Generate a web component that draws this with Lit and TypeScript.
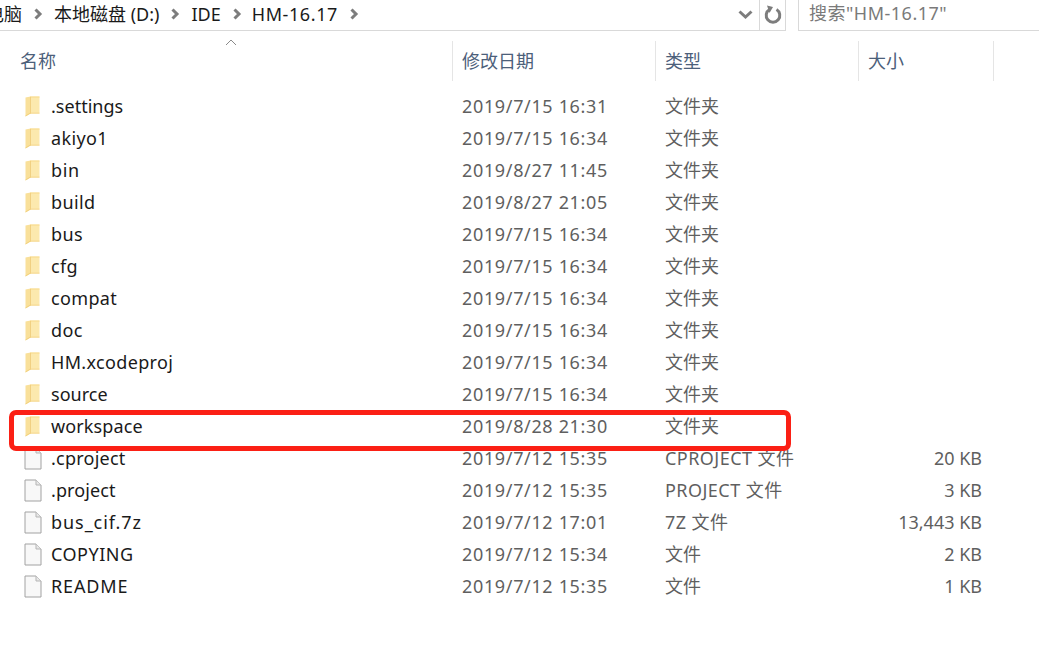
import { LitElement, html, css, svg } from "lit";
import { customElement } from "lit/decorators.js";

const F = "文件夹";
// name, date, type, size, is folder, letter-spacing of the name in px
const rows: [string, string, string, string, boolean, number][] = [
  [".settings", "2019/7/15 16:31", F, "", true, 0.02],
  ["akiyo1", "2019/7/15 16:34", F, "", true, 0.35],
  ["bin", "2019/8/27 11:45", F, "", true, 0.6],
  ["build", "2019/8/27 21:05", F, "", true, 0.35],
  ["bus", "2019/7/15 16:34", F, "", true, 0.35],
  ["cfg", "2019/7/15 16:34", F, "", true, 0.35],
  ["compat", "2019/7/15 16:34", F, "", true, 0.35],
  ["doc", "2019/7/15 16:34", F, "", true, 0.35],
  ["HM.xcodeproj", "2019/7/15 16:34", F, "", true, 0.35],
  ["source", "2019/7/15 16:34", F, "", true, 0.02],
  ["workspace", "2019/8/28 21:30", F, "", true, 0.13],
  [".cproject", "2019/7/12 15:35", "CPROJECT 文件", "20 KB", false, 0.23],
  [".project", "2019/7/12 15:35", "PROJECT 文件", "3 KB", false, 0.1],
  ["bus_cif.7z", "2019/7/12 17:01", "7Z 文件", "13,443 KB", false, 0.95],
  ["COPYING", "2019/7/12 15:34", "文件", "2 KB", false, 0.5],
  ["README", "2019/7/12 15:35", "文件", "1 KB", false, 0.85],
];

const folder = svg`<svg width="15" height="21" viewBox="0 0 15 21">
  <path d="M5 0.5 H14.5 V17.5 H5 Z" fill="#fce9ae"/>
  <path d="M5 0.5 H14.5 V1.6 H5 Z" fill="#f8dc90"/>
  <path d="M0.5 1.5 L5.5 0.5 V17.5 L0.5 20.5 Z" fill="#f9e09a"/>
  <path d="M5 1 L5.7 1 V17.5 L5 17.8 Z" fill="#ecc774"/>
  <path d="M0.5 20.5 L5.5 17.5 H14.5 V16.8 H5 L0.5 19.6 Z" fill="#f1d07e"/>
</svg>`;

const file = svg`<svg width="18" height="23" viewBox="0 0 18 23">
  <path d="M1 1 H12 L17 6 V22 H1 Z" fill="#f8f8f8" stroke="#a2a2a2"/>
  <path d="M12 1 V6 H17" fill="#e8e8e8" stroke="#b5b5b5"/>
</svg>`;

const chev = svg`<svg width="9" height="12" viewBox="0 0 9 12"><path d="M1.5 1.5 L6 6 L1.5 10.5" fill="none" stroke="#7d7d7d" stroke-width="3"/></svg>`;

@customElement("app-root")
export class AppRoot extends LitElement {
  static styles = css`
    :host {
      display: block;
      width: 1039px;
      height: 646px;
      position: relative;
      overflow: hidden;
      background: #fff;
      font-family: "Noto Sans", "Noto Sans CJK SC", sans-serif;
      font-size: 18px;
      color: #1a1a1a;
    }
    .top {
      display: flex;
      height: 31px;
      align-items: stretch;
    }
    .crumbs {
      width: 760px;
      display: flex;
      align-items: center;
      overflow: hidden;
      border-bottom: 1px solid #d9d9d9;
      border-right: 1px solid #d9d9d9;
      box-sizing: border-box;
      position: relative;
      white-space: nowrap;
      padding-bottom: 2px;
    }
    .crumbs .first { margin-left: -14px; }
    .crumbs span { line-height: 28px; }
    .crumbs .hm { letter-spacing: 0.6px; margin-left: -1px; }
    .sep { display: flex; margin: 0 11px 0 12px; }
    .dd { position: absolute; right: 6px; top: 10px; display: flex; }
    .refresh {
      width: 26px;
      border-bottom: 1px solid #d9d9d9;
      border-right: 1px solid #d9d9d9;
      box-sizing: border-box;
      display: flex;
      align-items: center;
      justify-content: center;
      padding-bottom: 2px;
    }
    .gap { width: 12px; }
    .search {
      flex: 1;
      border-bottom: 1px solid #d9d9d9;
      border-left: 1px solid #d9d9d9;
      box-sizing: border-box;
      padding-left: 10px;
      color: #7a7a7a;
      line-height: 27px;
      letter-spacing: 0.5px;
    }
    .head {
      display: grid;
      grid-template-columns: 452px 203px 203px 136px;
      height: 40px;
      margin-top: 10px;
      color: #4c607a;
      position: relative;
    }
    .sort { position: absolute; left: 225px; top: -2px; display: flex; }
    .hc {
      line-height: 40px;
      padding-left: 9px;
      border-right: 1px solid #e5e5e5;
      box-sizing: border-box;
    }
    .hc:first-child { padding-left: 20px; border-right: none; }
    .hc:nth-child(2), .hc:nth-child(3), .hc:nth-child(4) { border-left: 1px solid #e5e5e5; border-right: none; }
    .hc:nth-child(4) { border-right: 1px solid #e5e5e5; }
    .list { margin-top: 9px; }
    .row {
      display: grid;
      grid-template-columns: 452px 203px 203px 124px;
      height: 32px;
      align-items: center;
    }
    .name { display: flex; align-items: center; }
    .ic { width: 51px; display: flex; padding-left: 25px; box-sizing: border-box; }
    .ic.file { padding-left: 24px; }
    .date { padding-left: 10px; color: #5f5f5f; letter-spacing: 0.65px; }
    .type { padding: 0 0 2px 10px; color: #5f5f5f; }
    .type.latin { letter-spacing: 0.45px; }
    .size { text-align: right; color: #5f5f5f; }
    .mark {
      position: absolute;
      left: 9px;
      top: 410px;
      width: 782px;
      height: 41px;
      border: 5px solid #fb2015;
      border-radius: 7px;
      box-sizing: border-box;
    }
  `;
  render() {
    return html`
      <div class="top">
        <div class="crumbs">
          <span class="first">电脑</span>
          <div class="sep">${chev}</div>
          <span>本地磁盘 (D:)</span>
          <div class="sep">${chev}</div>
          <span>IDE</span>
          <div class="sep">${chev}</div>
          <span class="hm">HM-16.17</span>
          <div class="sep">${chev}</div>
          <div class="dd">
            <svg width="15" height="10" viewBox="0 0 15 10"><path d="M1.5 1.5 L7.5 7 L13.5 1.5" fill="none" stroke="#7d7d7d" stroke-width="3"/></svg>
          </div>
        </div>
        <div class="refresh">
          <svg width="18" height="19" viewBox="0 0 18 19"><path d="M12.5 4.5 A6.8 6.8 0 1 1 5.5 4.5" fill="none" stroke="#7d7d7d" stroke-width="3"/><path d="M3 0.5 L9 2 L5.5 8 Z" fill="#7d7d7d"/></svg>
        </div>
        <div class="gap"></div>
        <div class="search">搜索"HM-16.17"</div>
      </div>
      <div class="head">
        <div class="hc">名称</div>
        <div class="hc">修改日期</div>
        <div class="hc">类型</div>
        <div class="hc">大小</div>
        <div class="sort">
          <svg width="12" height="7" viewBox="0 0 12 7"><path d="M1 6 L6 1 L11 6" fill="none" stroke="#8a8a8a" stroke-width="1"/></svg>
        </div>
      </div>
      <div class="list">
        ${rows.map(
          (r) => html`<div class="row">
            <div class="name"><div class="ic ${r[4] ? "" : "file"}">${r[4] ? folder : file}</div><span style="letter-spacing:${r[5]}px">${r[0]}</span></div>
            <div class="date">${r[1]}</div>
            <div class="type ${/[A-Z]/.test(r[2]) ? "latin" : ""}">${r[2]}</div>
            <div class="size">${r[3]}</div>
          </div>`
        )}
      </div>
      <div class="mark"></div>
    `;
  }
}
